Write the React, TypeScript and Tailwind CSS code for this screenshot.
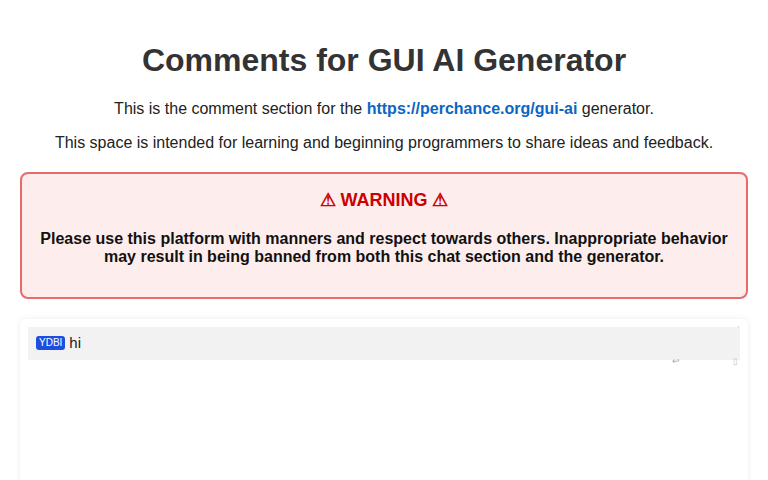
import React from "react";

export default function App() {
  return (
    <div
      className="min-h-[480px] bg-white p-[20px] text-[#222]"
      style={{ fontFamily: '"Liberation Sans", Arial, sans-serif' }}
    >
      <h1 className="mt-[22px] mb-[21px] text-center text-[32px] font-bold leading-[37px] text-[#333]">
        Comments for GUI AI Generator
      </h1>
      <p className="mt-[1px] text-center text-[16px] leading-[18.4px]">
        This is the comment section for the{" "}
        <a className="font-bold text-[#0b66c3]" href="#">
          https://perchance.org/gui-ai
        </a>{" "}
        generator.
      </p>
      <p className="mt-[16px] text-center text-[16px] leading-[18.4px]">
        This space is intended for learning and beginning programmers to share ideas and feedback.
      </p>
      <div className="mt-[19px] rounded-[8px] border-2 border-[#e86b6b] bg-[#fdeded] px-[18px] pt-[16px] pb-[15px] text-center">
        <div className="mb-[19px] text-[18px] font-bold leading-[21px] text-[#cc0000]">
          ⚠ WARNING ⚠
        </div>
        <p className="mb-[16px] text-[16px] font-bold leading-[18px] text-[#111]">
          Please use this platform with manners and respect towards others. Inappropriate behavior may
          result in being banned from both this chat section and the generator.
        </p>
      </div>
      <div className="mt-[20px] h-[400px] rounded-[6px] bg-white p-[8px] shadow-[0_0_6px_rgba(0,0,0,0.08)]">
        <div className="relative flex h-[33px] items-center bg-[#f2f2f2] px-[8px]">
          <span className="mr-[4px] inline-flex h-[14px] items-center rounded-[3px] bg-[#1d4ee0] px-[3px] text-[10px] leading-[14px] text-white">
            YDBI
          </span>
          <span className="text-[15px] text-[#222]">hi</span>
          <span className="absolute right-[1px] top-[-2px] text-[6px] leading-[6px] text-[#999]">'</span>
          <span className="absolute right-[60px] bottom-[-6px] text-[9px] leading-[9px] text-[#aaa]">↩</span>
          <span className="absolute right-[3px] bottom-[-6px] text-[8px] leading-[9px] text-[#bbb]">▯</span>
        </div>
      </div>
    </div>
  );
}
